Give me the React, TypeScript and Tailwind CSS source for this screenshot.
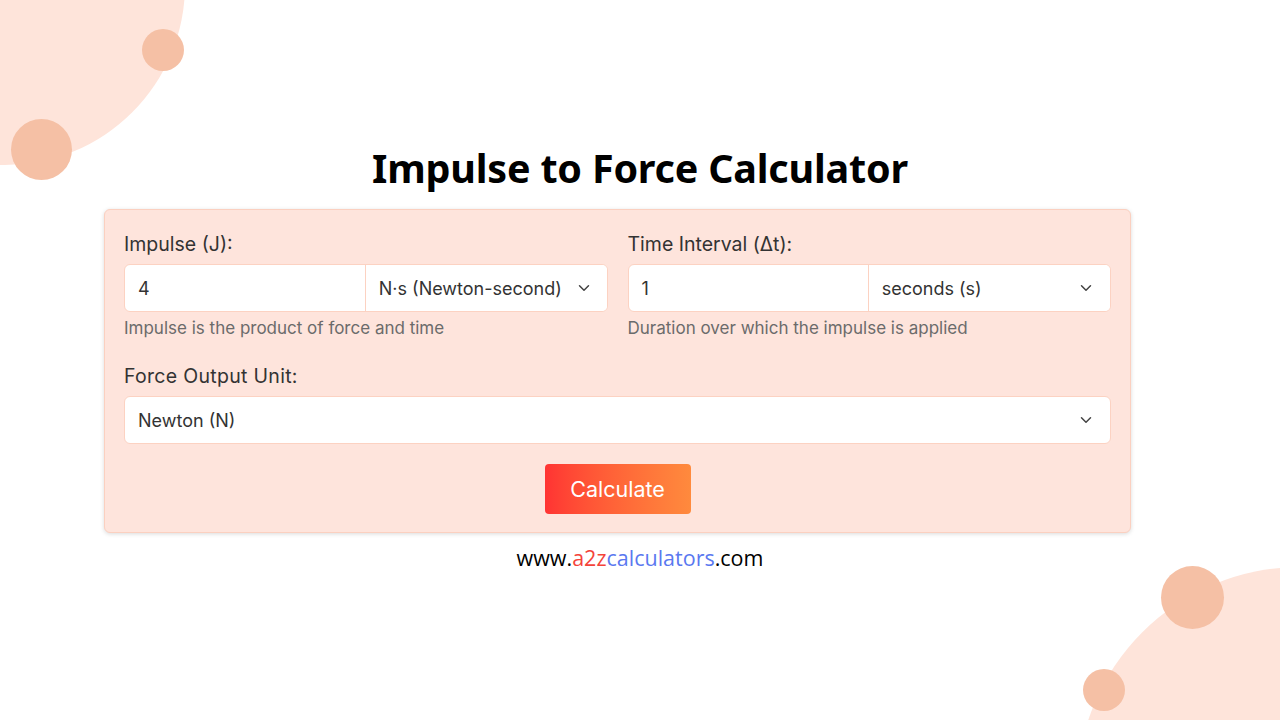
import { ChevronDown } from 'lucide-react';

function UnitSelect({ value, className = '' }: { value: string; className?: string }) {
  return (
    <div className={`flex items-center justify-between bg-white text-[18px] text-[#333] ${className}`}>
      <span>{value}</span>
      <ChevronDown className="w-[18px] h-[18px] text-[#444]" strokeWidth={2} />
    </div>
  );
}

function Field({ label, value, unit, help, unitPad }: { label: string; value: string; unit: string; help: string; unitPad: string }) {
  return (
    <div className="flex flex-col">
      <label className="text-[19.5px] leading-[28px] text-[#333] mb-1.5">{label}</label>
      <div className="flex h-[48px] rounded-md border border-[#fcd2c2] overflow-hidden bg-white">
        <div className="flex-1 flex items-center px-[13px] text-[18px] text-[#333] border-r border-[#fcd2c2]">{value}</div>
        <UnitSelect value={unit} className={`flex-1 pl-[13px] ${unitPad}`} />
      </div>
      <p className="mt-1 text-[17px] leading-[24px] text-[#6b6b6b]">{help}</p>
    </div>
  );
}

export default function App() {
  return (
    <div className="relative w-full h-[720px] overflow-hidden bg-white" style={{ fontFamily: 'Inter, "Noto Sans", sans-serif' }}>
      {/* decorative blobs */}
      <div className="absolute left-[-175px] top-[-195px] w-[360px] h-[360px] rounded-full bg-[#fee4da]" />
      <div className="absolute left-[142px] top-[29px] w-[42px] h-[42px] rounded-full bg-[#f5c0a5]" />
      <div className="absolute left-[11px] top-[119px] w-[61px] h-[61px] rounded-full bg-[#f5c0a5]" />
      <div className="absolute left-[1077px] top-[567px] w-[446px] h-[446px] rounded-full bg-[#fee4da]" />
      <div className="absolute left-[1161px] top-[566px] w-[63px] h-[63px] rounded-full bg-[#f5c0a5]" />
      <div className="absolute left-[1083px] top-[669px] w-[42px] h-[42px] rounded-full bg-[#f5c0a5]" />

      <div className="relative flex flex-col items-center pt-[144px]">
        <h1 className="text-[39.5px] leading-[48px] font-bold text-black tracking-[-0.2px]" style={{ fontFamily: '"Noto Sans", sans-serif' }}>
          Impulse to Force Calculator
        </h1>

        <div className="mt-[17px] mr-[45px] w-[1027px] rounded-md border border-[#fbd0c0] bg-[#fee4dc] shadow-[0_1px_4px_rgba(0,0,0,0.15)] px-[19px] pt-[20px] pb-[18px]">
          <div className="grid grid-cols-2 gap-x-[20px]">
            <Field label="Impulse (J):" value="4" unit="N·s (Newton-second)" help="Impulse is the product of force and time" unitPad="pr-[14px]" />
            <Field label="Time Interval (Δt):" value="1" unit="seconds (s)" help="Duration over which the impulse is applied" unitPad="pr-[15px]" />
          </div>

          <label className="block mt-[22px] text-[19.5px] leading-[28px] text-[#333] mb-1.5 tracking-[0.3px]">Force Output Unit:</label>
          <UnitSelect value="Newton (N)" className="h-[48px] rounded-md border border-[#fcd2c2] pl-[13px] pr-[15px]" />

          <div className="flex justify-center mt-[20px]">
            <button className="w-[146px] h-[50px] rounded-[4px] bg-gradient-to-r from-[#ff3333] to-[#ff8a3d] text-white text-[21.5px]">
              Calculate
            </button>
          </div>
        </div>

        <p className="mt-[11px] text-[21.5px] leading-[28px] text-black" style={{ fontFamily: '"Open Sans", sans-serif' }}>
          www.<span className="text-[#f4433a]">a2z</span><span className="text-[#5a78f0]">calculators</span>.com
        </p>
      </div>
    </div>
  );
}
